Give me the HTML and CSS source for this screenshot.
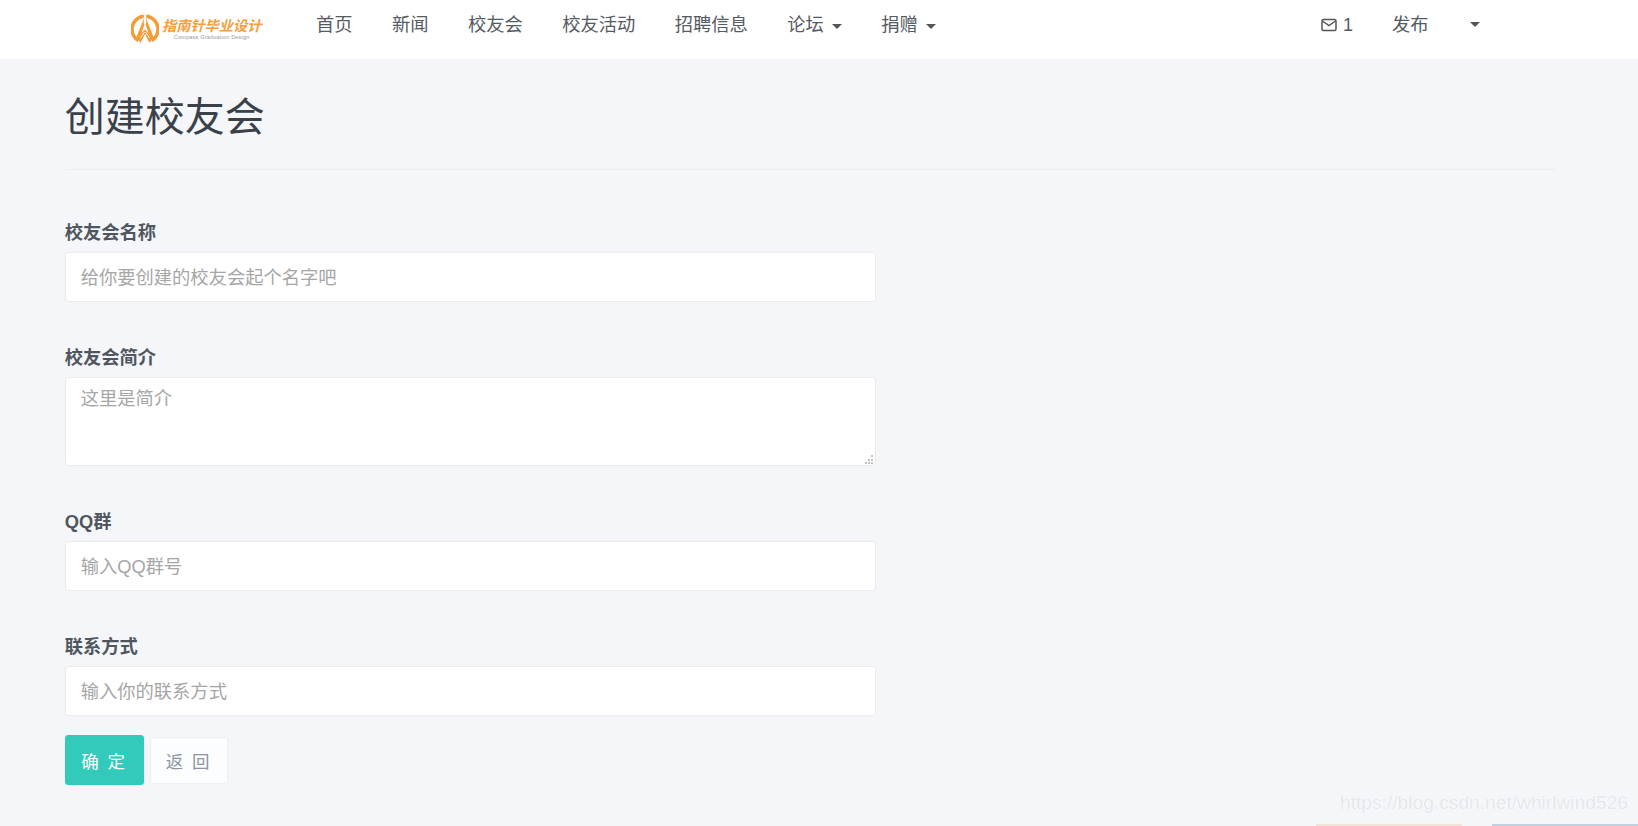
FILE: index.html
```html
<!DOCTYPE html>
<html lang="zh-CN">
<head>
<meta charset="utf-8">
<title>创建校友会</title>
<link rel="stylesheet" href="styles.css">
</head>
<body>
<header class="navbar">
  <a class="logo" href="#">
    <svg class="logo-mark" viewBox="0 0 28 32" width="28" height="32" aria-hidden="true">
      <path d="M7.500 28.500A13 13 0 1 1 20.500 28.500" fill="none" stroke="#f39c38" stroke-width="3.500"/>
      <path d="M14 3.500L5.500 25l4 6 4.500-9 4.500 9 4-6z" fill="#f39c38"/>
      <path d="M14 11l-3.500 10 3.500-3.500 3.500 3.500z" fill="#fff"/>
      <path d="M13.300 0h1.400v12h-1.400zM9.500 26l4-6M18.500 26l-4-6" stroke="#fff" stroke-width="1" fill="#fff"/>
    </svg>
    <span class="logo-text">
      <span class="logo-cn">指南针毕业设计</span>
      <span class="logo-en">Compass Graduation Design</span>
    </span>
  </a>
  <nav class="nav">
    <a href="#">首页</a>
    <a href="#">新闻</a>
    <a href="#">校友会</a>
    <a href="#">校友活动</a>
    <a href="#">招聘信息</a>
    <a href="#">论坛<i class="caret"></i></a>
    <a href="#">捐赠<i class="caret"></i></a>
  </nav>
  <div class="nav-right">
    <a class="mail" href="#">
      <svg viewBox="0 0 16 14" width="16" height="14" aria-hidden="true">
        <rect x="1" y="1.500" width="14" height="11" rx="1.500" fill="none" stroke="#555" stroke-width="1.500"/>
        <path d="M1.500 3l6.500 4.500L14.500 3" fill="none" stroke="#555" stroke-width="1.500"/>
      </svg>
      1
    </a>
    <a class="publish" href="#">发布</a>
    <a class="user" href="#"><i class="caret"></i></a>
  </div>
</header>

<main class="page">
  <h1 class="title">创建校友会</h1>
  <form class="form">
    <div class="group">
      <label class="label" for="name">校友会名称</label>
      <input class="field" id="name" type="text" placeholder="给你要创建的校友会起个名字吧">
    </div>
    <div class="group">
      <label class="label" for="intro">校友会简介</label>
      <textarea class="field area" id="intro" placeholder="这里是简介"></textarea>
    </div>
    <div class="group">
      <label class="label" for="qq">QQ群</label>
      <input class="field" id="qq" type="text" placeholder="输入QQ群号">
    </div>
    <div class="group group-last">
      <label class="label" for="contact">联系方式</label>
      <input class="field" id="contact" type="text" placeholder="输入你的联系方式">
    </div>
    <div class="actions">
      <button class="btn btn-primary" type="button">确 定</button>
      <button class="btn btn-default" type="button">返 回</button>
    </div>
  </form>
</main>

<div class="peek">
  <span class="peek-a"></span>
  <span class="peek-b"></span>
</div>
<div class="watermark">https://blog.csdn.net/whirlwind526</div>
</body>
</html>
```
FILE: styles.css
```css
* { box-sizing: border-box; }
html, body { height: 826px; overflow: hidden; }
body {
  margin: 0;
  position: relative;
  background: #f4f6fa;
  color: #555b63;
  font-family: "Liberation Sans", "Noto Sans CJK SC", sans-serif;
  font-size: 18.3px;
  display: flex;
  flex-direction: column;
}
a { color: inherit; text-decoration: none; }

.navbar {
  height: 58.500px;
  flex: none;
  background: #fff;
  display: flex;
  align-items: center;
  padding: 0 0 9px 131px;
}
.logo { display: flex; align-items: center; width: 185px; flex: none; padding-top: 10px; }
.logo-mark { flex: none; margin-top: -3px; }
.logo-text { display: flex; flex-direction: column; align-items: center; margin-left: 3px; }
.logo-cn { color: #f5a03c; font-size: 14.200px; font-weight: 700; font-style: italic; line-height: 16px; white-space: nowrap; }
.logo-en { color: #999; font-size: 5.500px; line-height: 7px; letter-spacing: .2px; white-space: nowrap; }

.nav { display: flex; gap: 39.400px; line-height: 24px; }
.nav a { white-space: nowrap; }
.caret {
  display: inline-block;
  width: 0;
  height: 0;
  margin-left: 8px;
  vertical-align: 2px;
  border-top: 5px solid #555;
  border-left: 5px solid transparent;
  border-right: 5px solid transparent;
}
.nav-right { margin-left: auto; display: flex; align-items: center; line-height: 24px; padding-right: 158px; }
.mail { display: flex; align-items: center; gap: 6px; width: 71px; font-size: 18px; }
.publish { width: 78px; }
.user { width: 10px; }
.user .caret { margin-left: 0; display: block; }

.page { padding: 0 83px 0 64.700px; flex: 1; }
.title {
  margin: 0;
  padding: 30px 0 25.500px;
  height: 111.500px;
  border-bottom: 1px solid #ebedf1;
  color: #3a4149;
  font-size: 40px;
  font-weight: 400;
  line-height: 56px;
}
.form { padding-top: 50px; width: 811.300px; }
.group { margin-bottom: 43px; }
.group-last { margin-bottom: 19px; }
.label { display: block; font-weight: 700; font-size: 18.300px; line-height: 26px; margin-bottom: 6px; color: #50565e; }
.field {
  display: block;
  width: 100%;
  height: 50px;
  padding: 2px 15px 0;
  border: 1px solid #ebebeb;
  border-radius: 3px;
  background: #fff;
  font: inherit;
  color: #555;
}
.field::placeholder { color: #a6a6a6; opacity: 1; }
.area {
  height: 89px;
  padding-top: 8px;
  line-height: 26px;
  resize: none;
  background-color: #fff;
  background-repeat: no-repeat;
  background-size: 2px 2px;
  background-image:
    linear-gradient(#c4c4c4, #c4c4c4), linear-gradient(#c4c4c4, #c4c4c4), linear-gradient(#c4c4c4, #c4c4c4),
    linear-gradient(#c4c4c4, #c4c4c4), linear-gradient(#c4c4c4, #c4c4c4), linear-gradient(#c4c4c4, #c4c4c4);
  background-position:
    right 2px bottom 1px, right 5px bottom 1px, right 8px bottom 1px,
    right 2px bottom 4px, right 5px bottom 4px,
    right 2px bottom 8px;
}

.actions { display: flex; align-items: center; gap: 6px; }
.btn {
  height: 47px;
  border-radius: 3px;
  font: inherit;
  font-size: 17.500px;
  padding: 0;
  letter-spacing: 2px;
}
.btn-primary { width: 79px; height: 50px; background: #33cabb; border: 1px solid #33cabb; color: #fff; }
.btn-default { width: 78px; background: #fcfdfe; border: 1px solid #eeeff2; color: #8b95a5; }

.peek { position: absolute; left: 0; right: 0; bottom: 0; height: 2px; display: flex; justify-content: flex-end; gap: 30px; }
.peek-a { width: 146px; background: #f3e4d8; }
.peek-b { width: 146px; background: #c2d0e2; }
.watermark {
  position: absolute;
  left: 1340px;
  top: 790px;
  color: rgba(0, 0, 0, .07);
  font-size: 19.200px;
  line-height: 26px;
  white-space: nowrap;
}
```
